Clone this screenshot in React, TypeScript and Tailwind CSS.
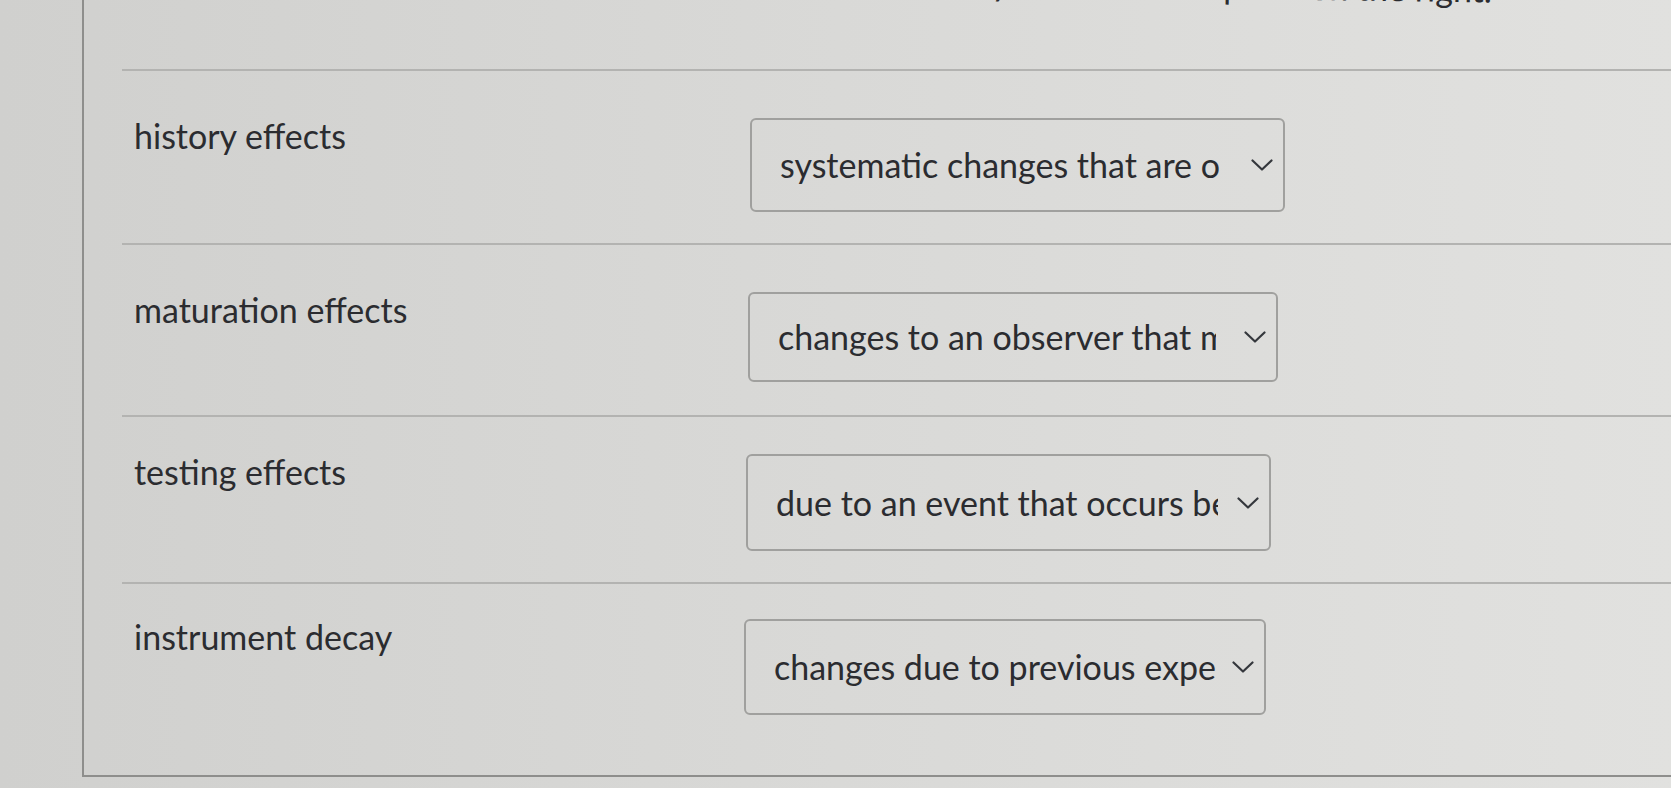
import React from 'react';

const rows = [
  {
    label: 'history effects',
    choice: 'systematic changes that are o',
    rowClass: 'h-[174px] pt-[47px]',
    boxClass: 'h-[94px] w-[535px] ml-[2px]',
    clipClass: 'w-[450px]',
  },
  {
    label: 'maturation effects',
    choice: 'changes to an observer that makes',
    rowClass: 'h-[172px] pt-[47px]',
    boxClass: 'h-[90px] w-[530px]',
    clipClass: 'w-[438px]',
  },
  {
    label: 'testing effects',
    choice: 'due to an event that occurs before',
    rowClass: 'h-[167px] pt-[37px]',
    boxClass: 'h-[97px] w-[525px] -ml-[2px]',
    clipClass: 'w-[442px]',
  },
  {
    label: 'instrument decay',
    choice: 'changes due to previous expe',
    rowClass: 'h-[193px] pt-[35px]',
    boxClass: 'h-[96px] w-[522px] -ml-[4px]',
    clipClass: 'w-[446px]',
  },
];

function Chevron() {
  return (
    <svg width="22" height="12" viewBox="0 0 22 12" fill="none" className="shrink-0">
      <polyline
        points="1.5,1.5 11,10.5 20.5,1.5"
        stroke="#34373c"
        strokeWidth="2.2"
        strokeLinecap="round"
        strokeLinejoin="round"
      />
    </svg>
  );
}

export default function App() {
  return (
    <div
      className="h-[788px] w-[1671px] overflow-hidden bg-linear-to-r from-[#d0d0ce] via-[#d9d9d7] to-[#e1e1df] pl-[82px] text-[#2b2c30]"
      style={{ fontFamily: 'Lato, "Open Sans", "Noto Sans", sans-serif' }}
    >
      <div className="h-[777px] border-b-2 border-l-2 border-[#8e8e8c]">
        {/* question prompt, mostly scrolled off the top */}
        <div className="h-[14px] overflow-hidden">
          <p className="-mt-[28px] origin-right rotate-[0.8deg] pr-[179px] text-right text-[34px] leading-[40px]">
            Match each threat to internal validity with its description on the right.
          </p>
        </div>

        <div className="ml-[38px] mt-[55px]">
          {rows.map((row) => (
            <div
              key={row.label}
              className={`flex items-start border-t-2 border-[#b3b3b1] ${row.rowClass}`}
            >
              <div className="-mt-[2px] w-[626px] shrink-0 pl-[12px] text-[34px] leading-[40px]">
                {row.label}
              </div>
              <div
                className={`flex items-center rounded-[6px] border-2 border-[#a0a09e] pl-[28px] pr-[10px] ${row.boxClass}`}
              >
                <span
                  className={`overflow-hidden whitespace-nowrap text-[34px] leading-[40px] ${row.clipClass}`}
                >
                  {row.choice}
                </span>
                <div className="ml-auto">
                  <Chevron />
                </div>
              </div>
            </div>
          ))}
        </div>
      </div>
    </div>
  );
}
